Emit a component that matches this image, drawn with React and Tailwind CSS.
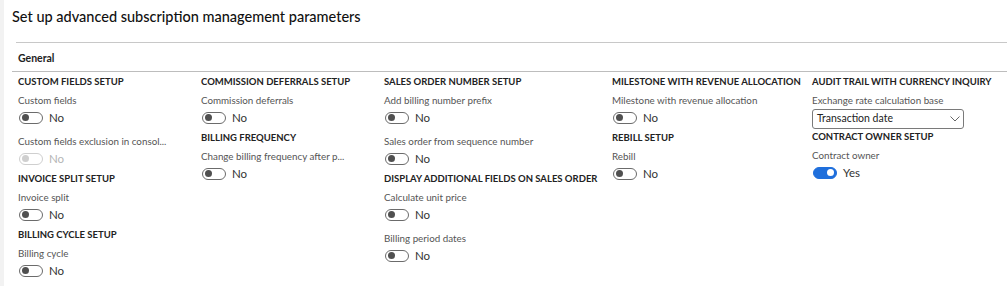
import clsx from "clsx";

const FONT = { fontFamily: 'Lato, "Open Sans", sans-serif' };

const columns = [
  {
    width: "w-[183px]",
    sections: [
      {
        title: "Custom fields setup",
        fields: [
          { label: "Custom fields" },
          { label: "Custom fields exclusion in consol...", disabled: true },
        ],
      },
      { title: "Invoice split setup", fields: [{ label: "Invoice split" }] },
      { title: "Billing cycle setup", fields: [{ label: "Billing cycle" }] },
    ],
  },
  {
    width: "w-[183px]",
    sections: [
      {
        title: "Commission deferrals setup",
        fields: [{ label: "Commission deferrals" }],
      },
      {
        title: "Billing frequency",
        fields: [{ label: "Change billing frequency after p..." }],
      },
    ],
  },
  {
    width: "w-[228px]",
    sections: [
      {
        title: "Sales order number setup",
        fields: [
          { label: "Add billing number prefix" },
          { label: "Sales order from sequence number" },
        ],
      },
      {
        title: "Display additional fields on sales order",
        fields: [
          { label: "Calculate unit price" },
          { label: "Billing period dates" },
        ],
      },
    ],
  },
  {
    width: "w-[200px]",
    sections: [
      {
        title: "Milestone with revenue allocation",
        fields: [{ label: "Milestone with revenue allocation" }],
      },
      { title: "Rebill setup", fields: [{ label: "Rebill" }] },
    ],
  },
  {
    width: "flex-1",
    sections: [
      {
        title: "Audit trail with currency inquiry",
        fields: [
          {
            label: "Exchange rate calculation base",
            select: "Transaction date",
          },
        ],
      },
      {
        title: "Contract owner setup",
        fields: [{ label: "Contract owner", on: true }],
      },
    ],
  },
];

function Toggle({ on, disabled }) {
  return (
    <div className="flex items-center h-[17px] pl-[1px]">
      <span
        className={clsx(
          "flex items-center w-[24px] h-[12px] rounded-full border px-[2px]",
          on && "justify-end bg-[#1f6fdc] border-[#1f6fdc]",
          !on && !disabled && "border-[#6b6b6b] bg-white",
          disabled && "border-[#cfcfcf] bg-white"
        )}
      >
        <span
          className={clsx(
            "w-[7px] h-[7px] rounded-full",
            on && "bg-white",
            !on && !disabled && "bg-[#505050]",
            disabled && "bg-[#cfcfcf]"
          )}
        />
      </span>
      <span
        className={clsx(
          "ml-[6px] text-[11.5px] leading-[17px]",
          disabled ? "text-[#b5b5b5]" : "text-[#333333]"
        )}
      >
        {on ? "Yes" : "No"}
      </span>
    </div>
  );
}

function Select({ value }) {
  return (
    <div className="flex items-center justify-between w-[152px] h-[20px] border border-[#7a7a7a] rounded-[3px] pl-[4px] pr-[3px] mb-[-4px]">
      <span className="text-[10.5px] text-[#222222]">{value}</span>
      <svg width="10" height="6" viewBox="0 0 10 6" fill="none">
        <polyline points="0.5,0.5 5,5 9.5,0.5" stroke="#666666" strokeWidth="1" />
      </svg>
    </div>
  );
}

function Field({ field }) {
  return (
    <div>
      <div className="text-[9.8px] leading-[18px] text-[#555555] whitespace-nowrap">
        {field.label}
      </div>
      {field.select ? (
        <Select value={field.select} />
      ) : (
        <Toggle on={field.on} disabled={field.disabled} />
      )}
    </div>
  );
}

export default function App() {
  return (
    <div className="flex w-full h-[286px] bg-white" style={FONT}>
      <div className="w-[4px] bg-[#f2f2f2]" />
      <div className="flex-1 min-w-0">
        <h1 className="pl-[8px] pt-[7px] text-[14.5px] leading-[20px] font-medium text-[#111111]">
          Set up advanced subscription management parameters
        </h1>
        <div className="ml-[12px] mt-[15px] h-[29px] border-t border-[#c8c8c8] pl-[2px] pt-[7px]">
          <div className="text-[10.5px] leading-[16px] font-bold text-[#222222]">
            General
          </div>
        </div>
        <div className="ml-[8px] border-t border-[#bdbdbd] flex pl-[6px] pt-[1px]">
          {columns.map((col, i) => (
            <div
              key={i}
              className={clsx("flex flex-col gap-[3px] shrink-0", col.width)}
            >
              {col.sections.map((s) => (
                <div key={s.title}>
                  <div className="text-[9.5px] leading-[18px] font-bold uppercase text-[#222222] whitespace-nowrap">
                    {s.title}
                  </div>
                  <div className="flex flex-col gap-[6px]">
                    {s.fields.map((f) => (
                      <Field key={f.label} field={f} />
                    ))}
                  </div>
                </div>
              ))}
            </div>
          ))}
        </div>
      </div>
    </div>
  );
}
